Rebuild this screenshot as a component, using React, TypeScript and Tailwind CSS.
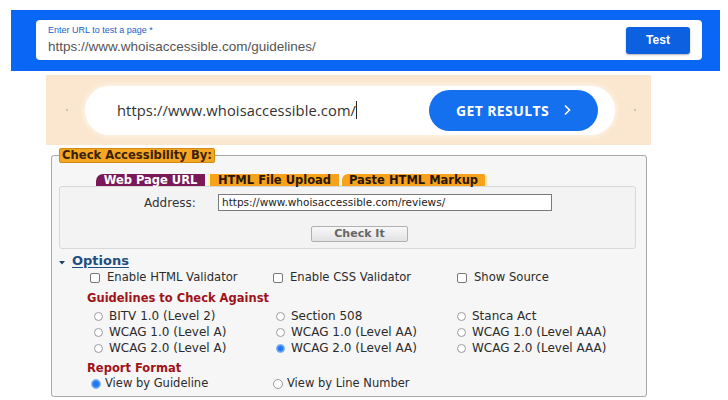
import React from "react";

const verdana = { fontFamily: '"DejaVu Sans", Verdana, sans-serif' };

function Radio({ checked, label, big }: { checked?: boolean; label: string; big?: boolean }) {
  return (
    <div className="flex items-center h-[16px]">
      <span
        className={
          "inline-block rounded-full border " +
          (checked
            ? "border-[#8cbcf5] bg-[#1f78ee] shadow-[inset_0_0_0_1px_#5a9cf2]"
            : "border-[#9a9a9a] bg-white") +
          (big ? " w-[10px] h-[10px]" : " w-[9px] h-[9px]")
        }
      />
      <span className={(big ? "ml-[4px] text-[11.5px]" : "ml-[6px] text-[12px]") + " text-[#2b2b2b] leading-none"}>{label}</span>
    </div>
  );
}

function Check({ label }: { label: string }) {
  return (
    <div className="flex items-center h-[16px]">
      <span className="inline-block w-[10px] h-[10px] border border-[#777] rounded-[2px] bg-white" />
      <span className="ml-[7px] text-[11.6px] text-[#2b2b2b] leading-none">{label}</span>
    </div>
  );
}

export default function App() {
  return (
    <div className="w-[728px] h-[400px] bg-white overflow-hidden">
      {/* top blue bar */}
      <div className="mt-[10px] ml-[11px] w-[709px] h-[61px] bg-[#0a66f5] pt-[10px] pl-[25px] pr-[18px]">
        <div className="h-[40px] bg-white rounded-[4px] flex items-center pl-[12px] pr-[12px]" style={{ fontFamily: '"Liberation Sans", Arial, sans-serif' }}>
          <div className="flex-1 flex flex-col">
            <span className="text-[9px] text-[#1a5fc8] leading-[11px] mt-[-1px]">Enter URL to test a page *</span>
            <span className="text-[13.5px] text-[#555] leading-[17px] mt-[2px]">https://www.whoisaccessible.com/guidelines/</span>
          </div>
          <div className="w-[64px] h-[27px] bg-[#0b61e0] rounded-[3px] flex items-center justify-center text-white font-bold text-[12px] shadow-[0_1px_2px_rgba(0,0,0,0.3)]">
            Test
          </div>
        </div>
      </div>

      {/* beige search */}
      <div className="mt-[4px] ml-[46px] w-[605px] h-[70px] bg-[#fbe7cf] flex items-center" style={{ fontFamily: '"Open Sans", "Noto Sans", sans-serif' }}>
        <span className="ml-[20px] w-[2px] h-[2px] rounded-full bg-[#bba]" />
        <div className="ml-[17px] w-[530px] h-[49px] bg-white rounded-full flex items-center pl-[32px] pr-[17px] shadow-[0_0_6px_rgba(255,255,255,0.9)]">
          <span className="flex-1 text-[14.7px] text-[#333] tracking-[0.1px] flex items-center">
            https://www.whoisaccessible.com/<span className="inline-block w-[1px] h-[18px] bg-[#222]" />
          </span>
          <div className="w-[169px] h-[41px] rounded-full bg-[#1470ee] flex items-center justify-center text-white font-bold text-[14px] tracking-[0.4px]">
            GET RESULTS
            <svg className="ml-[14px]" width="8" height="12" viewBox="0 0 8 12">
              <path d="M2 1.5 L6.5 6 L2 10.5" stroke="white" strokeWidth="1.6" fill="none" />
            </svg>
          </div>
        </div>
        <span className="ml-[19px] w-[2px] h-[2px] rounded-full bg-[#bba]" />
      </div>

      {/* fieldset */}
      <fieldset
        className="mt-[3px] ml-[51px] w-[594px] h-[249px] border border-[#a8a8a8] rounded-[3px] bg-[#f6f6f6] pl-[7px] pr-[10px]"
        style={verdana}
      >
        <legend className="bg-[#f5a623] border border-[#d08a10] rounded-[2px] px-[2px] h-[15px] text-[11.6px] font-bold text-[#3a2000] leading-[13px]">
          Check Accessibility By:
        </legend>

        {/* tabs */}
        <div className="mt-[11px] ml-[37px] flex items-end h-[12px] text-[11.5px] font-bold leading-[12px]">
          <div className="w-[109px] h-[12px] bg-[#7b1958] text-white rounded-tl-[7px] flex items-center justify-center">Web Page URL</div>
          <div className="w-[2px] h-[12px] bg-[#fff6c0] ml-[2px]" />
          <div className="w-[129px] h-[12px] bg-[#f7a21b] text-[#2a1600] ml-[1px] flex items-center justify-center">HTML File Upload</div>
          <div className="w-[145px] h-[12px] bg-[#f7a21b] text-[#2a1600] ml-[3px] rounded-tl-[6px] rounded-tr-[3px] flex items-center justify-center border-r-2 border-[#fde7b0]">Paste HTML Markup</div>
        </div>

        {/* panel */}
        <div className="w-[577px] h-[63px] bg-[#f3f3f3] border border-[#d8d8d8] rounded-[3px] pt-[7px]">
          <div className="flex items-center h-[17px]">
            <span className="ml-[84px] w-[74px] text-[12px] text-[#333]">Address:</span>
            <div className="w-[334px] h-[17px] border border-[#7a7a7a] bg-white text-[10.5px] text-[#222] leading-[15px] pl-[3px]">
              https://www.whoisaccessible.com/reviews/
            </div>
          </div>
          <div className="mt-[15px] ml-[251px] w-[97px] h-[16px] border border-[#b0b0b0] rounded-[2px] bg-gradient-to-b from-[#f8f8f8] to-[#e2e2e2] flex items-center justify-center text-[11px] font-bold text-[#666]">
            Check It
          </div>
        </div>

        {/* options */}
        <div className="mt-[5px] flex items-center h-[14px]">
          <svg width="6" height="4" viewBox="0 0 6 4" className="mt-[3px]">
            <path d="M0 0 H6 L3 3.5 Z" fill="#1f3f66" />
          </svg>
          <span className="ml-[7px] text-[13px] font-bold text-[#1f4f80] underline underline-offset-2 leading-[14px]">Options</span>
        </div>

        <div className="mt-[2px] ml-[31px] grid grid-cols-[183px_184px_1fr]">
          <Check label="Enable HTML Validator" />
          <Check label="Enable CSS Validator" />
          <Check label="Show Source" />
        </div>

        <div className="mt-[4px] ml-[28px] text-[11.5px] font-bold text-[#a0121a] h-[16px] leading-[16px]">Guidelines to Check Against</div>

        <div className="mt-[2px] ml-[35px] grid grid-cols-[182px_181px_1fr]">
          <Radio label="BITV 1.0 (Level 2)" />
          <Radio label="Section 508" />
          <Radio label="Stanca Act" />
          <Radio label="WCAG 1.0 (Level A)" />
          <Radio label="WCAG 1.0 (Level AA)" />
          <Radio label="WCAG 1.0 (Level AAA)" />
          <Radio label="WCAG 2.0 (Level A)" />
          <Radio checked label="WCAG 2.0 (Level AA)" />
          <Radio label="WCAG 2.0 (Level AAA)" />
        </div>

        <div className="mt-[4px] ml-[28px] text-[11.5px] font-bold text-[#a0121a] h-[16px] leading-[16px]">Report Format</div>
        <div className="ml-[32px] grid grid-cols-[182px_1fr]">
          <Radio big checked label="View by Guideline" />
          <Radio big label="View by Line Number" />
        </div>
      </fieldset>
    </div>
  );
}
